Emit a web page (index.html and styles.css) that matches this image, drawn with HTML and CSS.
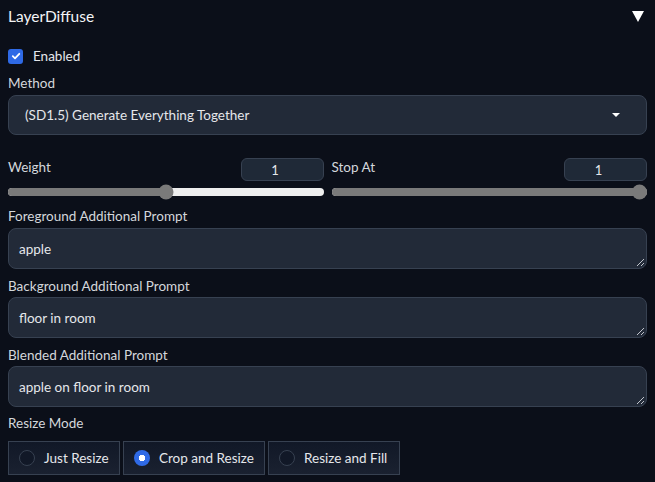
FILE: index.html
```html
<!DOCTYPE html>
<html>
<head>
<meta charset="utf-8">
<link rel="stylesheet" href="styles.css">
</head>
<body>
<div class="panel">
  <div class="header">
    <span class="title">LayerDiffuse</span>
    <span class="toggle"></span>
  </div>
  <label class="check-row">
    <span class="checkbox"><svg width="10" height="10" viewBox="0 0 10 10"><path d="M1.8 5.2 L4 7.3 L8.3 2.8" fill="none" stroke="#fff" stroke-width="1.8" stroke-linecap="round" stroke-linejoin="round"/></svg></span>
    <span class="check-text">Enabled</span>
  </label>
  <div class="group g-method">
    <div class="label">Method</div>
    <div class="dropdown">
      <span>(SD1.5) Generate Everything Together</span>
      <span class="caret"></span>
    </div>
  </div>
  <div class="sliders">
    <div class="slider-col">
      <div class="slider-head">
        <span class="label">Weight</span>
        <span class="num">1</span>
      </div>
      <div class="track">
        <div class="fill" style="width:50%"></div>
        <div class="thumb" style="left:50%"></div>
      </div>
    </div>
    <div class="slider-col">
      <div class="slider-head">
        <span class="label">Stop At</span>
        <span class="num">1</span>
      </div>
      <div class="track">
        <div class="fill" style="width:100%"></div>
        <div class="thumb" style="left:100%"></div>
      </div>
    </div>
  </div>
  <div class="group g-text g-first">
    <div class="label">Foreground Additional Prompt</div>
    <div class="textarea">apple<span class="grip"></span></div>
  </div>
  <div class="group g-text">
    <div class="label">Background Additional Prompt</div>
    <div class="textarea">floor in room<span class="grip"></span></div>
  </div>
  <div class="group g-text">
    <div class="label">Blended Additional Prompt</div>
    <div class="textarea">apple on floor in room<span class="grip"></span></div>
  </div>
  <div class="group g-radio">
    <div class="label">Resize Mode</div>
    <div class="radios">
      <div class="radio r1"><span class="dot"></span>Just Resize</div>
      <div class="radio r2 selected"><span class="dot"></span>Crop and Resize</div>
      <div class="radio r3"><span class="dot"></span>Resize and Fill</div>
    </div>
  </div>
</div>
</body>
</html>
```
FILE: styles.css
```css
* { box-sizing: border-box; }
html, body { margin: 0; padding: 0; }
body {
  background: #0b0f19;
  font-family: "Lato", "Noto Sans", sans-serif;
  color: #e5e7eb;
  width: 655px;
  height: 482px;
  overflow: hidden;
}
.panel {
  padding: 0 8px;
  display: flex;
  flex-direction: column;
}
.header {
  height: 32px;
  display: flex;
  align-items: center;
  justify-content: space-between;
}
.title {
  font-size: 15.5px;
  color: #f3f4f6;
}
.toggle {
  width: 0; height: 0;
  border-left: 6px solid transparent;
  border-right: 6px solid transparent;
  border-top: 11px solid #ffffff;
  margin-right: 3px;
  margin-top: 1px;
}
.check-row {
  margin-top: 14px;
  height: 20px;
  display: flex;
  align-items: center;
  gap: 10px;
}
.checkbox {
  width: 15px; height: 15px;
  border-radius: 3px;
  background: #2f6ae6;
  display: flex;
  align-items: center;
  justify-content: center;
}
.check-text { font-size: 13.5px; color: #e5e7eb; }
.label {
  font-size: 13.5px;
  line-height: 20px;
  color: #d4d7dc;
}
.group { display: flex; flex-direction: column; }
.g-method { margin-top: 7px; gap: 2px; }
.dropdown {
  height: 40px;
  border: 1px solid #374151;
  border-radius: 8px;
  background: #222a38;
  display: flex;
  align-items: center;
  justify-content: space-between;
  padding: 0 26px 0 16px;
  font-size: 13.5px;
  color: #e5e7eb;
}
.caret {
  width: 0; height: 0;
  border-left: 4px solid transparent;
  border-right: 4px solid transparent;
  border-top: 4px solid #ffffff;
}
.sliders {
  margin-top: 23px;
  display: flex;
  gap: 8px;
}
.slider-col { flex: 1; display: flex; flex-direction: column; }
.slider-head {
  height: 24px;
  display: flex;
  align-items: flex-start;
  justify-content: space-between;
}
.slider-head .label { margin-top: -1px; }
.num {
  width: 83px;
  height: 23px;
  border: 1px solid #374151;
  border-radius: 6px;
  background: #1f2937;
  display: flex;
  align-items: center;
  justify-content: center;
  padding-right: 14px;
  font-size: 13px;
  color: #e5e7eb;
}
.track {
  position: relative;
  margin: 6px 0 0 0;
  height: 8px;
  border-radius: 4px;
  background: #eeeeee;
}
.fill {
  position: absolute;
  left: 0; top: 0; bottom: 0;
  border-radius: 4px;
  background: #7a7a7a;
}
.thumb {
  position: absolute;
  top: 50%;
  width: 15px; height: 15px;
  border-radius: 50%;
  background: #7a7a7a;
  transform: translate(-50%, -50%);
}
.slider-col:last-child .thumb { transform: translate(-100%, -50%); }
.g-text { margin-top: 7px; gap: 1px; }
.g-first { margin-top: 10px; gap: 2px; }
.textarea {
  position: relative;
  height: 41px;
  border: 1px solid #374151;
  border-radius: 8px;
  background: #222a38;
  padding: 0 10px;
  display: flex;
  align-items: center;
  font-size: 13.5px;
  color: #e5e7eb;
}
.grip {
  position: absolute;
  right: 2px; bottom: 2px;
  width: 7px; height: 7px;
  background: linear-gradient(135deg, transparent 45%, #c0c4cc 45%, #c0c4cc 55%, transparent 55%, transparent 75%, #c0c4cc 75%, #c0c4cc 85%, transparent 85%);
}
.g-radio { margin-top: 6px; gap: 8px; }
.radios { display: flex; gap: 3px; }
.radio {
  height: 34px;
  border: 1px solid #374151;
  background: linear-gradient(to bottom, #111827, #1a2130);
  display: flex;
  align-items: center;
  gap: 9px;
  padding: 0 0 0 10px;
  font-size: 13.5px;
  color: #e5e7eb;
  white-space: nowrap;
}
.r1 { width: 112px; }
.r2 { width: 142px; }
.r3 { width: 132px; }
.dot {
  flex: none;
  width: 16px; height: 16px;
  border-radius: 50%;
  border: 1px solid #374151;
  background: #111827;
}
.selected .dot {
  border: none;
  background: radial-gradient(circle, #ffffff 0 3px, #2f6ae6 3.5px);
}
```
